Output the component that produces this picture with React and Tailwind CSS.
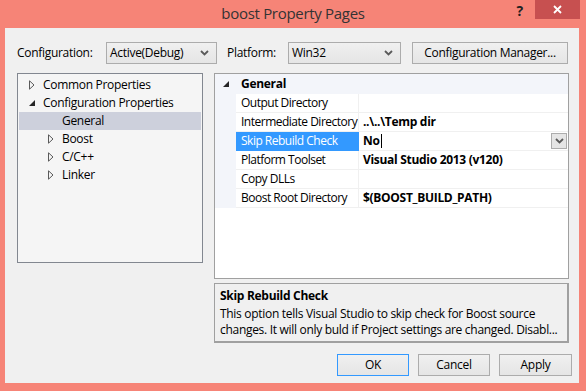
import React from "react";

const Chevron = () => (
  <svg width="9" height="6" viewBox="0 0 9 6" className="block">
    <path d="M1 1 L4.5 4.5 L8 1" fill="none" stroke="#5a5a5a" strokeWidth="1.8" />
  </svg>
);

const Collapsed = () => (
  <svg width="6" height="10" viewBox="0 0 6 10" className="block">
    <path d="M0.5 0.8 L5 5 L0.5 9.2 Z" fill="none" stroke="#595959" strokeWidth="1" />
  </svg>
);

const Expanded = () => (
  <svg width="6" height="6" viewBox="0 0 6 6" className="block">
    <path d="M6 0 L6 6 L0 6 Z" fill="#262626" />
  </svg>
);

function Dropdown({ label, width }) {
  return (
    <div
      className={`${width} h-[22px] border border-[#acacac] bg-gradient-to-b from-[#f0f0f0] to-[#e5e5e5] flex items-center pl-[3px] pr-[7px]`}
    >
      <span className="flex-1">{label}</span>
      <Chevron />
    </div>
  );
}

function TreeRow({ indent, icon, label, selected }) {
  return (
    <div
      className={`h-[18px] flex items-center mx-[1px] ${selected ? "bg-[#cdd0dc]" : ""}`}
    >
      <div className={`${indent ? "w-[43px] pl-[29px]" : "w-[24px] pl-[10px]"} flex items-center`}>
        {icon === "c" && <Collapsed />}
        {icon === "e" && <Expanded />}
      </div>
      <span>{label}</span>
    </div>
  );
}

function PropRow({ name, value, selected }) {
  return (
    <div className="h-[19px] flex">
      <div className="w-[21px] bg-[#f3f5fa]" />
      <div
        className={`w-[123px] pl-[5px] flex items-center border-b border-r overflow-hidden ${
          selected ? "bg-[#3399ff] text-white border-[#3399ff]" : "border-[#f0f0f0]"
        }`}
      >
        <span className="whitespace-nowrap tracking-[-0.5px]">{name}</span>
      </div>
      <div className="flex-1 pl-[4px] flex items-center border-b border-[#f0f0f0] font-bold">
        <span className="flex-1 whitespace-nowrap flex items-center">
          {value}
          {selected && <span className="inline-block w-[1px] h-[14px] bg-black ml-[1px]" />}
        </span>
        {selected && (
          <div className="w-[16px] h-[16px] border border-[#acacac] bg-[#e5e5e5] flex items-center justify-center mr-[1px]">
            <Chevron />
          </div>
        )}
      </div>
    </div>
  );
}

function Button({ children, primary, width }) {
  return (
    <div
      className={`${width} h-[22px] flex items-center justify-center border ${
        primary ? "border-[#3399ff]" : "border-[#acacac]"
      } bg-gradient-to-b from-[#f0f0f0] to-[#e5e5e5]`}
    >
      {children}
    </div>
  );
}

export default function App() {
  return (
    <div className="w-[586px] h-[391px] bg-[#f68477] flex flex-col text-[12px] tracking-[-0.3px] text-black font-['Open_Sans','Noto_Sans',sans-serif] leading-none overflow-hidden">
      <div className="h-[28px] grid grid-cols-[1fr_auto_1fr] items-start">
        <div />
        <div className="pt-[6px] text-[15px] tracking-[-0.3px] text-[#333333]">boost Property Pages</div>
        <div className="flex justify-end items-start">
          <div className="pt-[4px] pr-[12px] font-bold text-[14px] text-[#222]">?</div>
          <div className="w-[45px] h-[19px] bg-[#c75050] flex items-center justify-center mr-[6px]">
            <svg width="9" height="9" viewBox="0 0 9 9">
              <path d="M1 1 L8 8 M8 1 L1 8" stroke="white" strokeWidth="1.8" />
            </svg>
          </div>
        </div>
      </div>
      <div className="mx-[5px] w-[574px] h-[355px] bg-[#f0f0f0] flex flex-col pl-[12px] pr-[7px] pt-[14px]">
        <div className="h-[22px] flex items-center">
          <span className="w-[89px]">Configuration:</span>
          <Dropdown label="Active(Debug)" width="w-[111px]" />
          <span className="w-[61px] ml-[10px]">Platform:</span>
          <Dropdown label="Win32" width="w-[113px]" />
          <div className="ml-[11px] w-[156px] h-[22px] border border-[#acacac] bg-gradient-to-b from-[#f0f0f0] to-[#e5e5e5] flex items-center justify-center">
            Configuration Manager...
          </div>
        </div>
        <div className="mt-[9px] flex gap-[11px]">
          <div className="w-[186px] h-[190px] border border-[#828790] bg-[#f5f5f5] pt-[2px]">
            <TreeRow icon="c" label="Common Properties" />
            <TreeRow icon="e" label="Configuration Properties" />
            <TreeRow indent label="General" selected />
            <TreeRow indent icon="c" label="Boost" />
            <TreeRow indent icon="c" label="C/C++" />
            <TreeRow indent icon="c" label="Linker" />
          </div>
          <div className="w-[355px] flex flex-col">
            <div className="h-[206px] border border-[#a0a0a0] bg-white">
              <div className="h-[20px] bg-[#f3f5fa] flex items-center font-bold">
                <div className="w-[26px] pl-[8px] flex items-center">
                  <Expanded />
                </div>
                <span>General</span>
              </div>
              <PropRow name="Output Directory" value="" />
              <PropRow name="Intermediate Directory" value="..\..\Temp dir" />
              <PropRow name="Skip Rebuild Check" value="No" selected />
              <PropRow name="Platform Toolset" value="Visual Studio 2013 (v120)" />
              <PropRow name="Copy DLLs" value="" />
              <PropRow name="Boost Root Directory" value="$(BOOST_BUILD_PATH)" />
            </div>
            <div className="mt-[4px] h-[60px] border border-[#a0a0a0] border-b-2 border-r-2 bg-[#f0f0f0] pl-[5px] pt-[4px] leading-[16px]">
              <div className="font-bold">Skip Rebuild Check</div>
              <div className="mt-[2px]">This option tells Visual Studio to skip check for Boost source</div>
              <div className="whitespace-nowrap">changes. It will only buld if Project settings are changed. Disabl...</div>
            </div>
          </div>
        </div>
        <div className="mt-[11px] flex justify-end gap-[9px]">
          <Button primary width="w-[72px]">OK</Button>
          <Button width="w-[72px]">Cancel</Button>
          <Button width="w-[73px]">Apply</Button>
        </div>
      </div>
    </div>
  );
}
